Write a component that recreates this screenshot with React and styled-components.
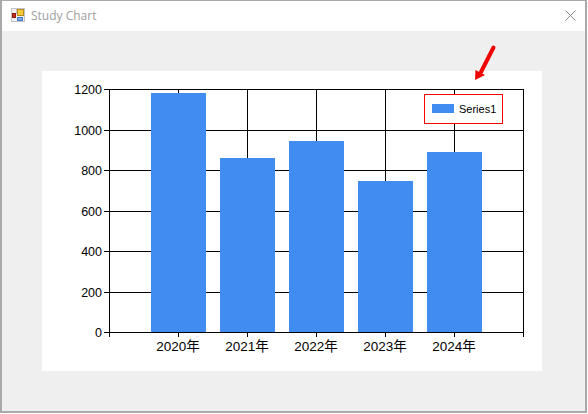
import React from 'react';
import styled, { createGlobalStyle } from 'styled-components';

const GlobalStyle = createGlobalStyle`
    html, body {
        margin: 0;
        padding: 0;
        background: #ffffff;
    }
`;

const Window = styled.div`
    position: relative;
    width: 587px;
    height: 413px;
    box-sizing: border-box;
    border: 2px solid #a9a9a9;
    border-top-width: 1px;
    background: #efefef;
    display: flex;
    flex-direction: column;
    overflow: hidden;
`;

const TitleBar = styled.div`
    height: 30px;
    background: #ffffff;
    display: flex;
    align-items: center;
    padding: 0 9px;
    flex-shrink: 0;
`;

const AppIcon = styled.svg`
    width: 14px;
    height: 14px;
    margin: -2px 6px 0 0;
`;

const Title = styled.span`
    flex: 1;
    margin-top: -2px;
    font-family: 'Open Sans', sans-serif;
    font-size: 12px;
    color: #a0a0a0;
`;

const CloseIcon = styled.svg`
    width: 11px;
    height: 11px;
    margin-top: -2px;
`;

const Body = styled.div`
    flex: 1;
    padding: 40px 0 0 40px;
`;

const ChartPanel = styled.div`
    width: 500px;
    height: 300px;
    background: #ffffff;
`;

const ChartSvg = styled.svg`
    display: block;
    shape-rendering: crispEdges;
`;

const YLabel = styled.text`
    font-family: 'Liberation Sans', sans-serif;
    font-size: 12.5px;
    fill: #000000;
`;

const XLabel = styled.text`
    font-family: 'Liberation Sans', 'Noto Sans CJK SC', sans-serif;
    font-size: 13.5px;
    fill: #000000;
`;

const LegendText = styled.text`
    font-family: 'Liberation Sans', sans-serif;
    font-size: 11px;
    fill: #000000;
`;

const Arrow = styled.svg`
    position: absolute;
    left: 468px;
    top: 41px;
    width: 30px;
    height: 42px;
`;

const xGrid = [67, 136, 205, 274, 343, 412, 481];
const yTicks = [
    { label: '1200', y: 18 },
    { label: '1000', y: 59 },
    { label: '800', y: 99 },
    { label: '600', y: 140 },
    { label: '400', y: 180 },
    { label: '200', y: 221 },
    { label: '0', y: 261 },
];
const bars = [
    { label: '2020年', x: 109, top: 22 },
    { label: '2021年', x: 178, top: 87 },
    { label: '2022年', x: 247, top: 70 },
    { label: '2023年', x: 316, top: 110 },
    { label: '2024年', x: 385, top: 81 },
];

const App = () => {
    return (
        <Window>
            <GlobalStyle />
            <TitleBar>
                <AppIcon viewBox="0 0 14 14">
                    <rect x="0.5" y="0.5" width="13" height="13" fill="#f0f0f0" stroke="#c4c4c4" />
                    <path d="M0 5.5 H6 M5.5 0 V6" stroke="#c4c4c4" fill="none" />
                    <rect x="6.5" y="1.5" width="6" height="6" fill="#f5c93a" stroke="#b98a1e" />
                    <rect x="1.5" y="5.5" width="3" height="4" fill="#d02a22" stroke="#8a1a14" />
                    <rect x="6.5" y="9.5" width="5" height="3" fill="#7aa8ec" stroke="#4a7cc8" />
                </AppIcon>
                <Title>Study Chart</Title>
                <CloseIcon viewBox="0 0 11 11">
                    <path d="M0.5 0.5 L10.5 10.5 M10.5 0.5 L0.5 10.5" stroke="#8a8a8a" strokeWidth="1" fill="none" />
                </CloseIcon>
            </TitleBar>
            <Body>
                <ChartPanel>
                    <ChartSvg width="500" height="300" viewBox="0 0 500 300">
                        {xGrid.map((x) => (
                            <rect key={x} x={x} y="18" width="1" height="248" fill="#000000" />
                        ))}
                        {yTicks.map((t) => (
                            <g key={t.label}>
                                <rect x="62" y={t.y} width="419" height="1" fill="#000000" />
                                <YLabel x="60" y={t.y + 5} textAnchor="end">{t.label}</YLabel>
                            </g>
                        ))}
                        {bars.map((b) => (
                            <g key={b.label}>
                                <rect x={b.x} y={b.top} width="55" height={261 - b.top} fill="#418cf0" />
                                <XLabel x={b.x + 27} y="280" textAnchor="middle">{b.label}</XLabel>
                            </g>
                        ))}
                        <rect x="382.5" y="23.5" width="78" height="29" fill="#ffffff" stroke="#ff0000" />
                        <rect x="390" y="33" width="22" height="9" fill="#418cf0" />
                        <LegendText x="417" y="42">Series1</LegendText>
                    </ChartSvg>
                </ChartPanel>
            </Body>
            <Arrow viewBox="0 0 30 42">
                <path d="M23.5 5.5 L11 30" stroke="#f00000" strokeWidth="4" strokeLinecap="round" fill="none" />
                <polygon points="5,38 5.5,28 15,33" fill="#f00000" />
            </Arrow>
        </Window>
    );
};

export default App;
